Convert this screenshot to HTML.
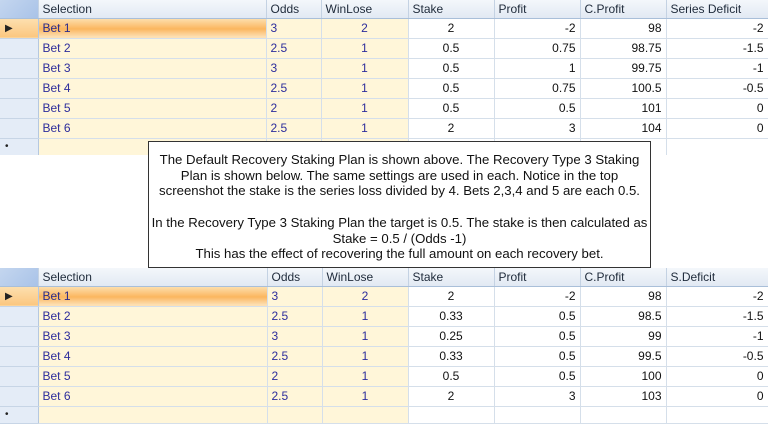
<!DOCTYPE html>
<html><head><meta charset="utf-8">
<style>
*{margin:0;padding:0;box-sizing:border-box}
body{width:768px;height:425px;background:#fff;font-family:"Liberation Sans",Arial,sans-serif;font-size:12px;position:relative;overflow:hidden}
.g{position:absolute;left:0;width:768px;border-collapse:collapse;table-layout:fixed}
.g td,.g th{border-right:1px solid #d5dfea;border-bottom:1px solid #d5dfea;height:20px;padding:0 4px;white-space:nowrap;overflow:hidden;font-weight:normal}
.g th{height:18px;text-align:left;color:#1e2a3a;background:linear-gradient(#f4f7fb,#e2e9f3);border-right:1px solid #c4d2e3;border-bottom:1px solid #a9bfd9;font-size:12px}
.g th.c{background:linear-gradient(135deg,#c4d6ef,#a9c3e8);}
.g td.h{background:#e4ecf7;border-right:1px solid #b5c8e0;border-bottom:1px solid #c7d5e6;text-align:left;font-size:10px;color:#222;padding-left:5px}
.g td.y{background:#fff6d9;color:#2d2d9c}
.g td.r{text-align:right;color:#111}
.g td.m{text-align:center;color:#111}
.g td.ym{text-align:center}
.g td.s{background:linear-gradient(#fde0b0,#fbb65f 55%,#fde3ba);color:#2a2a8a}
.g td.hs{background:linear-gradient(#fde0b0,#fbc67f);}
.g tr.new td{height:17px}
.box{position:absolute;left:148px;top:141px;width:503px;height:127px;background:#fff;border:1px solid #333;text-align:center;font-size:13.2px;line-height:15.7px;padding-top:10px;color:#111;white-space:nowrap}
</style></head><body>

<table class="g" style="top:0">
<colgroup><col style="width:38px"><col style="width:228px"><col style="width:55px"><col style="width:87px"><col style="width:86px"><col style="width:86px"><col style="width:86px"><col style="width:102px"></colgroup>
<tr><th class="c"></th><th>Selection</th><th>Odds</th><th>WinLose</th><th>Stake</th><th>Profit</th><th>C.Profit</th><th>Series Deficit</th></tr>
<tr><td class="h hs">▶</td><td class="s">Bet 1</td><td class="y">3</td><td class="y ym">2</td><td class="m">2</td><td class="r">-2</td><td class="r">98</td><td class="r">-2</td></tr>
<tr><td class="h"></td><td class="y">Bet 2</td><td class="y">2.5</td><td class="y ym">1</td><td class="m">0.5</td><td class="r">0.75</td><td class="r">98.75</td><td class="r">-1.5</td></tr>
<tr><td class="h"></td><td class="y">Bet 3</td><td class="y">3</td><td class="y ym">1</td><td class="m">0.5</td><td class="r">1</td><td class="r">99.75</td><td class="r">-1</td></tr>
<tr><td class="h"></td><td class="y">Bet 4</td><td class="y">2.5</td><td class="y ym">1</td><td class="m">0.5</td><td class="r">0.75</td><td class="r">100.5</td><td class="r">-0.5</td></tr>
<tr><td class="h"></td><td class="y">Bet 5</td><td class="y">2</td><td class="y ym">1</td><td class="m">0.5</td><td class="r">0.5</td><td class="r">101</td><td class="r">0</td></tr>
<tr><td class="h"></td><td class="y">Bet 6</td><td class="y">2.5</td><td class="y ym">1</td><td class="m">2</td><td class="r">3</td><td class="r">104</td><td class="r">0</td></tr>
<tr class="new"><td class="h" style="border-bottom:none">•</td><td class="y" style="border-bottom:none"></td><td class="y" style="border-bottom:none"></td><td class="y" style="border-bottom:none"></td><td style="border-bottom:none"></td><td style="border-bottom:none"></td><td style="border-bottom:none"></td><td style="border:none"></td></tr>
</table>

<div class="box">The Default Recovery Staking Plan is shown above. The Recovery Type 3 Staking<br>Plan is shown below. The same settings are used in each. Notice in the top<br>screenshot the stake is the series loss divided by 4. Bets 2,3,4 and 5 are each 0.5.<br><br>In the Recovery Type 3 Staking Plan the target is 0.5. The stake is then calculated as<br>Stake = 0.5 / (Odds -1)<br>This has the effect of recovering the full amount on each recovery bet.</div>

<table class="g" style="top:268px">
<colgroup><col style="width:38px"><col style="width:229px"><col style="width:55px"><col style="width:86px"><col style="width:86px"><col style="width:86px"><col style="width:86px"><col style="width:102px"></colgroup>
<tr><th class="c"></th><th>Selection</th><th>Odds</th><th>WinLose</th><th>Stake</th><th>Profit</th><th>C.Profit</th><th>S.Deficit</th></tr>
<tr><td class="h hs">▶</td><td class="s">Bet 1</td><td class="y">3</td><td class="y ym">2</td><td class="m">2</td><td class="r">-2</td><td class="r">98</td><td class="r">-2</td></tr>
<tr><td class="h"></td><td class="y">Bet 2</td><td class="y">2.5</td><td class="y ym">1</td><td class="m">0.33</td><td class="r">0.5</td><td class="r">98.5</td><td class="r">-1.5</td></tr>
<tr><td class="h"></td><td class="y">Bet 3</td><td class="y">3</td><td class="y ym">1</td><td class="m">0.25</td><td class="r">0.5</td><td class="r">99</td><td class="r">-1</td></tr>
<tr><td class="h"></td><td class="y">Bet 4</td><td class="y">2.5</td><td class="y ym">1</td><td class="m">0.33</td><td class="r">0.5</td><td class="r">99.5</td><td class="r">-0.5</td></tr>
<tr><td class="h"></td><td class="y">Bet 5</td><td class="y">2</td><td class="y ym">1</td><td class="m">0.5</td><td class="r">0.5</td><td class="r">100</td><td class="r">0</td></tr>
<tr><td class="h"></td><td class="y">Bet 6</td><td class="y">2.5</td><td class="y ym">1</td><td class="m">2</td><td class="r">3</td><td class="r">103</td><td class="r">0</td></tr>
<tr class="new"><td class="h">•</td><td class="y"></td><td class="y"></td><td class="y"></td><td></td><td></td><td></td><td></td></tr>
</table>

</body></html>
